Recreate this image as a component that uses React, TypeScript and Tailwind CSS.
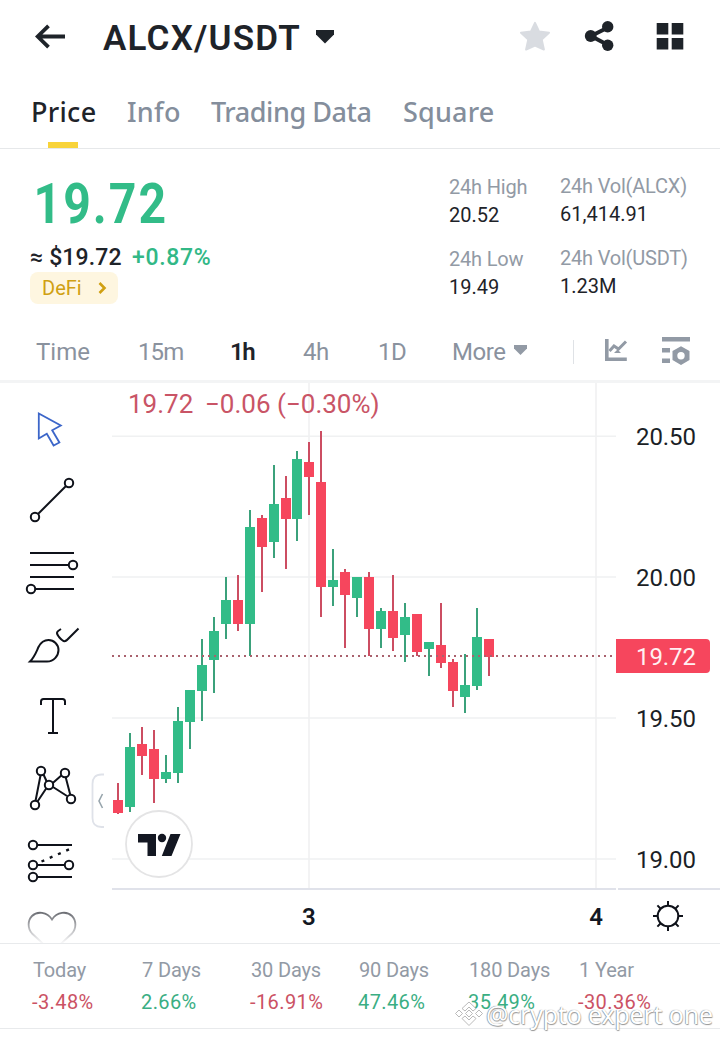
import React from "react";

type Candle = { x: number; high: number; low: number; top: number; bottom: number; up?: boolean };

const candles: Candle[] = [
  { x: 118, high: 783, low: 814, top: 800, bottom: 813 },
  { x: 130, high: 733, low: 812, top: 747, bottom: 807, up: true },
  { x: 142, high: 727, low: 775, top: 744, bottom: 756 },
  { x: 154, high: 730, low: 803, top: 749, bottom: 779 },
  { x: 166, high: 755, low: 783, top: 772, bottom: 779, up: true },
  { x: 178, high: 707, low: 783, top: 721, bottom: 773, up: true },
  { x: 190, high: 690, low: 749, top: 690, bottom: 722, up: true },
  { x: 202, high: 639, low: 721, top: 665, bottom: 691, up: true },
  { x: 214, high: 617, low: 693, top: 631, bottom: 660, up: true },
  { x: 226, high: 577, low: 639, top: 600, bottom: 624, up: true },
  { x: 238, high: 575, low: 631, top: 600, bottom: 624 },
  { x: 250, high: 510, low: 656, top: 527, bottom: 624, up: true },
  { x: 262, high: 515, low: 592, top: 518, bottom: 547 },
  { x: 274, high: 465, low: 558, top: 504, bottom: 542, up: true },
  { x: 286, high: 476, low: 569, top: 498, bottom: 519 },
  { x: 297, high: 451, low: 541, top: 459, bottom: 519, up: true },
  { x: 309, high: 442, low: 515, top: 462, bottom: 477 },
  { x: 321, high: 431, low: 617, top: 482, bottom: 587 },
  { x: 333, high: 549, low: 606, top: 580, bottom: 587, up: true },
  { x: 345, high: 569, low: 648, top: 572, bottom: 595 },
  { x: 357, high: 577, low: 617, top: 577, bottom: 598, up: true },
  { x: 369, high: 572, low: 656, top: 577, bottom: 629 },
  { x: 381, high: 608, low: 648, top: 611, bottom: 629, up: true },
  { x: 393, high: 575, low: 651, top: 611, bottom: 638 },
  { x: 405, high: 603, low: 662, top: 617, bottom: 635, up: true },
  { x: 417, high: 614, low: 656, top: 614, bottom: 652 },
  { x: 429, high: 642, low: 676, top: 642, bottom: 649, up: true },
  { x: 441, high: 603, low: 668, top: 645, bottom: 663 },
  { x: 453, high: 659, low: 707, top: 662, bottom: 691 },
  { x: 465, high: 654, low: 713, top: 685, bottom: 697, up: true },
  { x: 477, high: 608, low: 690, top: 637, bottom: 686, up: true },
  { x: 489, high: 639, low: 676, top: 639, bottom: 657 },
];

function Header() {
  return (
    <header className="flex h-[74px] shrink-0 items-center pl-[34px] text-[#1e2329]">
      <svg className="h-8 w-8" viewBox="0 0 32 32" fill="none" stroke="currentColor" strokeWidth="3.8">
        <path d="M31 15.5H4M14.5 4.8L3.7 15.5l10.8 10.7" />
      </svg>
      <h1 className="ml-[37px] w-[205px] whitespace-nowrap pt-[2px] font-['Roboto'] text-[35px] font-semibold leading-none tracking-[1.2px]">
        ALCX/USDT
      </h1>
      <svg className="ml-[7px] h-[14px] w-[20px]" viewBox="0 0 20 14" fill="currentColor">
        <path d="M1 0h18v4.5L10 13.5 1 4.5z" />
      </svg>
      <svg className="ml-[184px] h-8 w-8" viewBox="0 0 32 32" fill="#d9dce1" stroke="#d9dce1" strokeWidth="2" strokeLinejoin="round">
        <path d="M16 1.800l4 8.600 10 1.300-7.300 6.800 2.200 10L16 24.600 7.100 28.500l2.200-10L2 11.700l10-1.300z" />
      </svg>
      <svg className="ml-[33px] h-8 w-8" viewBox="0 0 32 32" fill="currentColor" stroke="currentColor">
        <path d="M23 7L7 15L23 23.500" fill="none" strokeWidth="4" />
        <g stroke="none">
          <circle cx="23.700" cy="5.800" r="5.700" />
          <circle cx="6.700" cy="15" r="5.900" />
          <circle cx="23.700" cy="24.300" r="5.700" />
        </g>
      </svg>
      <svg className="mb-[2px] ml-[40px] h-[27px] w-[28px]" viewBox="0 0 28 27" fill="currentColor">
        <path d="M.7 0h11.600v11.500H.7zM15.700 0h11.600v11.500h-11.600zM.7 15h11.600v11.500H.7zM15.700 15h11.600v11.500h-11.600z" />
      </svg>
    </header>
  );
}

function Tabs() {
  return (
    <nav className="flex h-[75px] shrink-0 border-b border-[#e6e8ea] pl-[31px] font-['Noto_Sans'] text-[27px] font-medium leading-[76px] text-[#848e9c]">
      <div className="flex w-[96px] flex-col">
        <span className="h-[68px] whitespace-nowrap tracking-[0.3px] text-[#1e2329]">Price</span>
        <span className="ml-[17px] h-[6px] w-[30px] bg-[#f8d33a]" />
      </div>
      <span className="w-[84px] whitespace-nowrap tracking-[0.3px]">Info</span>
      <span className="w-[192px] whitespace-nowrap tracking-[-0.45px]">Trading Data</span>
      <span className="whitespace-nowrap tracking-[0.2px]">Square</span>
    </nav>
  );
}

function Stat({ label, value }: { label: string; value: string }) {
  return (
    <div className="h-[72px] whitespace-nowrap">
      <div className="text-[20px] leading-[28px] tracking-[-0.2px] text-[#929aa5]">{label}</div>
      <div className="text-[20px] leading-[29px] text-[#1e2329]">{value}</div>
    </div>
  );
}

function Summary() {
  return (
    <section className="flex h-[171px] shrink-0">
      <div className="flex w-[449px] flex-col pl-[30px] pt-[26px]">
        <div className="origin-left scale-x-[0.86] pl-[4px] text-[56px] font-bold leading-[58px] tracking-[2.400px] text-[#32bc88]">19.72</div>
        <div className="mt-[8px] flex whitespace-nowrap text-[23px] font-medium leading-[33px]">
          <span className="w-[102px] tracking-[0.15px] text-[#1e2329]">≈ $19.72</span>
          <span className="tracking-[0.65px] text-[#32b886]">+0.87%</span>
        </div>
        <div className="mt-[-2px] flex h-8 w-[88px] items-center rounded-[8px] bg-[#fef6e0] pl-3 text-[20px] text-[#d0a012]">
          <span className="w-[56px]">DeFi</span>
          <svg className="h-3 w-[9px]" viewBox="0 0 9 12" fill="none" stroke="currentColor" strokeWidth="2.600">
            <path d="M1.500 1l5 5-5 5" />
          </svg>
        </div>
      </div>
      <div className="w-[111px] pt-[24px]">
        <Stat label="24h High" value="20.52" />
        <Stat label="24h Low" value="19.49" />
      </div>
      <div className="pt-[23px]">
        <Stat label="24h Vol(ALCX)" value="61,414.91" />
        <Stat label="24h Vol(USDT)" value="1.23M" />
      </div>
    </section>
  );
}

function Intervals() {
  return (
    <div className="flex h-[63px] shrink-0 items-center border-b-[3px] border-[#f3f4f5] pl-[36px] pt-[3px] text-[24px] leading-none text-[#8a929e]">
      <span className="w-[102px]">Time</span>
      <span className="w-[92px] tracking-[-0.9px]">15m</span>
      <span className="w-[73px] font-semibold tracking-[-1.500px] text-[#1e2329]">1h</span>
      <span className="w-[75px] tracking-[-0.5px]">4h</span>
      <span className="w-[74px] tracking-[-0.5px]">1D</span>
      <span className="w-[62px] tracking-[-0.4px]">More</span>
      <svg className="mb-[4px] h-[10px] w-[13px]" viewBox="0 0 13 10" fill="#929aa5">
        <path d="M0 0h13v3.500L6.500 10 0 3.500z" />
      </svg>
      <span className="ml-[46px] h-6 w-px bg-[#dfe2e6]" />
      <svg className="mb-[4px] ml-[30px] h-6 w-6" viewBox="0 0 24 24" fill="none" stroke="#929aa5" strokeWidth="3.600">
        <path d="M2.800 1v20.200h20" />
        <path d="M5.500 13l4.500-5 4.500 3L22 3.500" strokeWidth="3" />
        <path d="M13.500 11.500L17 15h-7z" fill="#929aa5" stroke="none" />
      </svg>
      <svg className="mb-[1px] ml-[34px] h-7 w-[28px]" viewBox="0 0 28 28" fill="#929aa5">
        <path d="M0 0h28v4.500H0zM0 11h8v4.500H0zM0 21.500h8V26H0z" />
        <path fillRule="evenodd" d="M19 9.300l8.500 4.800v9L19 28l-8.500-4.900v-9zM19 15a3.700 3.700 0 1 0 0 7.400 3.700 3.700 0 0 0 0-7.400z" />
      </svg>
    </div>
  );
}

function Toolbar() {
  return (
    <aside className="flex w-[112px] shrink-0 flex-col">
      <svg className="h-[81px] w-[112px]" viewBox="0 383 112 81" fill="none" stroke="#3c66c9" strokeWidth="1.800">
        <path d="M38.800 413.500v25l8-4.800 6.800 11.800 5.800-3-7.200-12.200 8.600-4.800z" />
      </svg>
      <svg className="h-[72px] w-[112px]" viewBox="0 464 112 72" fill="none" stroke="#0f121a" strokeWidth="2">
        <circle cx="69" cy="483" r="4.200" />
        <circle cx="35" cy="517" r="4.200" />
        <path d="M66 486l-28 28" />
      </svg>
      <svg className="h-[72px] w-[112px]" viewBox="0 536 112 72" fill="none" stroke="#0f121a" strokeWidth="2">
        <path d="M30 553h44M30 565h38.500M30 577h44M35.500 589H74" />
        <circle cx="73" cy="565" r="4.200" />
        <circle cx="31" cy="589" r="4.200" />
      </svg>
      <svg className="h-[72px] w-[112px]" viewBox="0 608 112 72" fill="none" stroke="#0f121a" strokeWidth="2">
        <path d="M30 661.500c4.500-4.500 6-9 8.500-14.500 2.500-5 6-7 10-7 5.500 0 10 4.500 10 10s-4.500 11.500-11.500 11.500zM61 629c-5 3-5 4-2 8 5 5.500 6 5.500 10 1l9.500-9.500" />
      </svg>
      <svg className="h-[72px] w-[112px]" viewBox="0 680 112 72" fill="none" stroke="#0f121a" strokeWidth="2">
        <path d="M41 705v-3.500q0-2.500 2.500-2.500h19q2.500 0 2.500 2.500v3.500M53 699v34M48 733h10" />
      </svg>
      <svg className="h-[72px] w-[112px]" viewBox="0 752 112 72" fill="none" stroke="#0f121a" strokeWidth="2">
        <path d="M40.600 775l-5 25.500M43.500 774.500l3.200 7M52.800 783l8.500-7.500M65.500 776.500l4.700 18M53 787l14 9M46.500 788l-9 13.500" />
        <circle cx="41" cy="771" r="4.200" />
        <circle cx="65" cy="773" r="4.200" />
        <circle cx="49" cy="785" r="4.200" />
        <circle cx="35" cy="805" r="4.200" />
        <circle cx="71" cy="799" r="4.200" />
      </svg>
      <svg className="h-[72px] w-[112px]" viewBox="0 824 112 72" fill="none" stroke="#0f121a" strokeWidth="2">
        <path d="M37.500 845H72M37.500 865H64.500M37.500 877H72" />
        <path d="M41.500 861.500L70 849" strokeWidth="2.400" strokeDasharray="3 6" />
        <circle cx="33" cy="845" r="4.200" />
        <circle cx="33" cy="865" r="4.200" />
        <circle cx="33" cy="877" r="4.200" />
        <circle cx="69" cy="865" r="4.200" />
      </svg>
      <svg className="h-[47px] w-[112px]" viewBox="0 896 112 47" fill="none" stroke="url(#fade)" strokeWidth="1.800">
        <defs>
          <linearGradient id="fade" gradientUnits="userSpaceOnUse" x1="0" y1="912" x2="0" y2="942">
            <stop offset="0" stopColor="#6b6d73" />
            <stop offset="1" stopColor="#f5f5f6" />
          </linearGradient>
        </defs>
        <path d="M52 919.500C47 911.500 37 911 32 916c-4.500 4.500-4.500 12.500 0 17.500L52 952l20-18.500c4.500-5 4.500-13 0-17.500-5-5-15-4.500-20 3.500z" />
      </svg>
    </aside>
  );
}

function Chart() {
  return (
    <div className="relative w-[504px] shrink-0">
      <svg className="block h-[507px] w-[504px]" viewBox="112 383 504 507">
        <path d="M112 436.300H616M112 577H616M112 718H616M112 859H616M309 383V888M596 383V888" stroke="#f0f1f2" strokeWidth="1.600" />
        <path d="M112 889H616" stroke="#e0e2ea" strokeWidth="2" />
        {candles.map((c) => (
          <g key={c.x}>
            <rect x={c.x - 1} y={c.high} width={2} height={c.low - c.high} fill={c.up ? "#3ba17b" : "#cc4d62"} />
            <rect x={c.x - 5} y={c.top} width={10} height={c.bottom - c.top} fill={c.up ? "#32bc88" : "#f6465d"} />
          </g>
        ))}
        <path d="M112 656H614" stroke="#a9616d" strokeWidth="2" strokeDasharray="2 4" />
        <circle cx="159" cy="844" r="33" fill="#fff" stroke="#e4e4e5" strokeWidth="1.800" />
        <g fill="#131722">
          <path d="M138 834h18v22h-8.500v-13.500H138zM170.500 834h10L171.500 856h-9.700z" />
          <circle cx="162" cy="838" r="4.200" />
        </g>
      </svg>
      <div className="absolute left-[16px] top-[6px] whitespace-nowrap text-[26px] leading-[30px] text-[#c95466]">
        <span className="inline-block w-[77px]">19.72</span>−0.06 (−0.30%)
      </div>
      <svg className="absolute left-[-21px] top-[390px] h-[56px] w-[14px]" viewBox="0 0 14 56" fill="none">
        <path d="M13 1.500h-2.500Q1.500 1.500 1.500 11v34q0 9 9 9H13" stroke="#dfe2e9" strokeWidth="1.800" />
        <path d="M11.500 21L8 28l3.500 7" stroke="#98a5ad" strokeWidth="1.600" />
      </svg>
      <div className="flex justify-between pl-[190px] pr-[13px] text-[24px] font-semibold leading-[55px] text-[#131722]">
        <span>3</span>
        <span>4</span>
      </div>
    </div>
  );
}

function PriceAxis() {
  return (
    <div className="flex flex-1 flex-col text-[24px] leading-[34px] text-[#1b1f26]">
      <div className="ml-[2px] flex h-[507px] flex-col border-b-2 border-[#e0e2ea] pl-[18px] pt-[37px] tracking-[-0.1px]">
        <span>20.50</span>
        <span className="mt-[107px]">20.00</span>
        <span className="ml-[-20px] mt-[44px] h-[34px] w-[94px] rounded-r-[4px] bg-[#f6465d] pl-[20px] leading-[36px] text-[#fff0f2]">19.72</span>
        <span className="mt-[29px]">19.50</span>
        <span className="mt-[107px]">19.00</span>
      </div>
      <svg className="ml-[36px] mt-[10px] h-8 w-8" viewBox="0 0 32 32" fill="none" stroke="#0f121a" strokeWidth="2">
        <circle cx="16" cy="16" r="10.300" />
        <path d="M16 1v5M16 26v5M1 16h5M26 16h5M5.400 5.400l3.300 3.300M23.300 23.300l3.300 3.300M26.600 5.400l-3.300 3.300M8.700 23.300l-3.300 3.300" />
      </svg>
    </div>
  );
}

function Change({ label, value, width }: { label: string; value: string; width: string }) {
  return (
    <div className={`${width} shrink-0 whitespace-nowrap`}>
      <div className="text-[20px] leading-[30px] tracking-[-0.15px] text-[#929aa5]">{label}</div>
      <div className={`ml-[-1px] text-[20px] leading-[34px] tracking-[0.4px] ${value.startsWith("-") ? "text-[#cb5264]" : "text-[#3aae83]"}`}>{value}</div>
    </div>
  );
}

function Performance() {
  return (
    <footer className="relative flex h-[86px] shrink-0 border-y border-[#e8eaec] pl-[33px] pt-[11px]">
      <Change label="Today" value="-3.48%" width="w-[109px]" />
      <Change label="7 Days" value="2.66%" width="w-[109px]" />
      <Change label="30 Days" value="-16.91%" width="w-[108px]" />
      <Change label="90 Days" value="47.46%" width="w-[110px]" />
      <Change label="180 Days" value="35.49%" width="w-[110px]" />
      <Change label="1 Year" value="-30.36%" width="w-[100px]" />
      <div className="absolute left-[455px] top-[55px] flex items-center whitespace-nowrap font-['Noto_Sans'] text-[25px] leading-[30px] tracking-[-0.2px] text-white [text-shadow:-0.5px_-0.5px_1px_#777,0.5px_0.5px_1px_#999]">
        <svg className="mr-[3px] h-[28px] w-[28px]" viewBox="0 0 28 28" fill="#fff" stroke="#a8a8a8" strokeWidth="0.800">
          <path d="M14 2l7 6.500-3 2.500-4-4-4 4-3-2.500zM4 10l3.500 3.500L4 17 .5 13.500zM24 10l3.500 3.500L24 17l-3.500-3.500zM14 10l3.500 3.500L14 17l-3.500-3.500zM7 18.500l3-2.500 4 4 4-4 3 2.500-7 7z" />
        </svg>
        @crypto expert one
      </div>
    </footer>
  );
}

export default function App() {
  return (
    <main className="flex h-[1037px] w-[720px] flex-col overflow-hidden bg-white font-['Roboto',sans-serif]">
      <Header />
      <Tabs />
      <Summary />
      <Intervals />
      <section className="flex h-[560px] shrink-0 overflow-hidden">
        <Toolbar />
        <Chart />
        <PriceAxis />
      </section>
      <Performance />
    </main>
  );
}
